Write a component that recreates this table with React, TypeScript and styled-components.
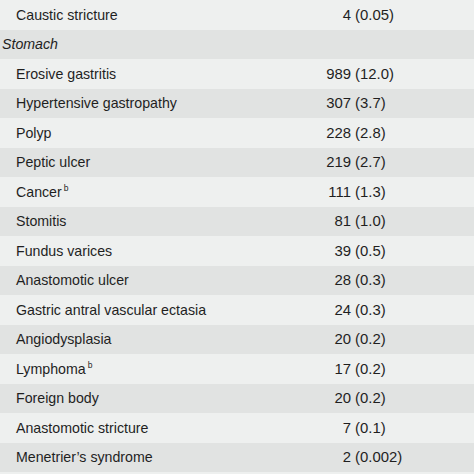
import React from "react";
import styled, { createGlobalStyle } from "styled-components";

const Global = createGlobalStyle`
  html, body { margin: 0; padding: 0; background: #eef0ef; }
  body { font-family: "Liberation Sans", Arial, sans-serif; color: #1f1f1f; }
`;

const Table = styled.div`
  width: 474px;
  height: 474px;
  overflow: hidden;
  background: #eef0ef;
`;

const Row = styled.div<{ $shade: boolean }>`
  display: grid;
  grid-template-columns: 300px 51px 1fr;
  align-items: center;
  height: 29.5px;
  background: ${(p) => (p.$shade ? "#e1e3e2" : "#eef0ef")};
`;

const Label = styled.div<{ $section?: boolean }>`
  padding-left: ${(p) => (p.$section ? "2px" : "16px")};
  font-size: 14.2px;
  font-style: ${(p) => (p.$section ? "italic" : "normal")};
  white-space: nowrap;
`;

const Count = styled.div`
  text-align: right;
  font-size: 14.9px;
`;

const Pct = styled.div`
  padding-left: 4px;
  font-size: 14.9px;
  white-space: nowrap;
`;

const Sup = styled.sup`
  font-size: 8.5px;
  margin-left: 2px;
  vertical-align: 6px;
  line-height: 0;
`;

type Item = { label: string; sup?: string; n?: string; pct?: string; section?: boolean };

const items: Item[] = [
  { label: "Caustic stricture", n: "4", pct: "(0.05)" },
  { label: "Stomach", section: true },
  { label: "Erosive gastritis", n: "989", pct: "(12.0)" },
  { label: "Hypertensive gastropathy", n: "307", pct: "(3.7)" },
  { label: "Polyp", n: "228", pct: "(2.8)" },
  { label: "Peptic ulcer", n: "219", pct: "(2.7)" },
  { label: "Cancer", sup: "b", n: "111", pct: "(1.3)" },
  { label: "Stomitis", n: "81", pct: "(1.0)" },
  { label: "Fundus varices", n: "39", pct: "(0.5)" },
  { label: "Anastomotic ulcer", n: "28", pct: "(0.3)" },
  { label: "Gastric antral vascular ectasia", n: "24", pct: "(0.3)" },
  { label: "Angiodysplasia", n: "20", pct: "(0.2)" },
  { label: "Lymphoma", sup: "b", n: "17", pct: "(0.2)" },
  { label: "Foreign body", n: "20", pct: "(0.2)" },
  { label: "Anastomotic stricture", n: "7", pct: "(0.1)" },
  { label: "Menetrier’s syndrome", n: "2", pct: "(0.002)" },
];

export default function App() {
  return (
    <>
      <Global />
      <Table>
        {items.map((it, i) => (
          <Row key={i} $shade={i % 2 === 1}>
            <Label $section={it.section}>
              {it.label}
              {it.sup && <Sup>{it.sup}</Sup>}
            </Label>
            <Count>{it.n ?? ""}</Count>
            <Pct>{it.pct ?? ""}</Pct>
          </Row>
        ))}
      </Table>
    </>
  );
}
